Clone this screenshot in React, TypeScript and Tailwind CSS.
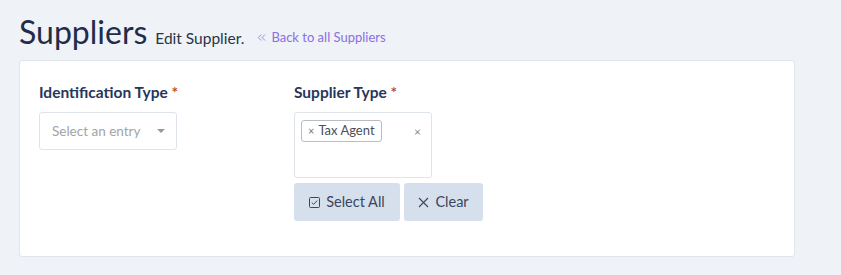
import { ChevronsLeft } from "lucide-react";

const font = { fontFamily: "Lato, 'Noto Sans', sans-serif" };

export default function App() {
  return (
    <div className="min-h-[275px] w-[841px] bg-[#eff2f7] px-[19px] pt-[11px]" style={font}>
      <div className="flex items-baseline gap-[8px]">
        <h1 className="text-[32px] font-normal leading-[42px] text-[#1f2d4a]">Suppliers</h1>
        <span className="text-[15.5px] text-[#2b3445]">Edit Supplier.</span>
        <a className="ml-[3px] flex items-center gap-[3px] text-[13px] text-[#8b6fe0]">
          <ChevronsLeft size={13} strokeWidth={1.5} />
          Back to all Suppliers
        </a>
      </div>

      <div className="mt-[7px] h-[197px] w-[776px] rounded-[3px] border border-[#e1e5ec] bg-white px-[19px] pt-[21px]">
        <div className="flex gap-[117px]">
          <div className="w-[138px]">
            <label className="block whitespace-nowrap text-[15.5px] font-bold leading-[20px] text-[#27375a]">
              Identification Type <span className="text-[#c0502f]">*</span>
            </label>
            <div className="mt-[10px] flex h-[38px] items-center justify-between rounded-[3px] border border-[#dfe3ea] pl-[12px] pr-[11px]">
              <span className="text-[13.5px] text-[#a0a4ab]">Select an entry</span>
              <span className="h-0 w-0 border-x-[4px] border-t-[4px] border-x-transparent border-t-[#999]" />
            </div>
          </div>

          <div>
            <label className="block whitespace-nowrap text-[15.5px] font-bold leading-[20px] text-[#27375a]">
              Supplier Type <span className="text-[#c0502f]">*</span>
            </label>
            <div className="mt-[10px] flex h-[66px] w-[138px] items-start justify-between rounded-[3px] border border-[#dfe3ea] pl-[6px] pr-[10px] pt-[7px]">
              <span className="flex h-[22px] items-center gap-[4px] rounded-[3px] border border-[#b8bcc3] px-[6px] text-[13px] text-[#4a4f58]">
                <span className="text-[11px] text-[#777]">×</span>Tax Agent
              </span>
              <span className="mt-[3px] text-[12px] text-[#888]">×</span>
            </div>
            <div className="mt-[5px] flex gap-[4px]">
              <button className="flex h-[38px] w-[106px] items-center justify-center gap-[6px] rounded-[3px] bg-[#d6e0ec] text-[14.5px] text-[#3a4660]">
                <svg width="11" height="11" viewBox="0 0 11 11" fill="none" stroke="#3a4660" strokeWidth="1">
                  <rect x="0.5" y="0.5" width="10" height="10" rx="1" />
                  <path d="M2.8 5.6 L4.6 7.3 L8.2 3.6" />
                </svg>
                Select All
              </button>
              <button className="flex h-[38px] w-[79px] items-center justify-center gap-[6px] rounded-[3px] bg-[#d6e0ec] text-[14.5px] text-[#3a4660]">
                <svg width="11" height="11" viewBox="0 0 11 11" fill="none" stroke="#3a4660" strokeWidth="1.1">
                  <path d="M1 1 L10 10 M10 1 L1 10" />
                </svg>
                Clear
              </button>
            </div>
          </div>
        </div>
      </div>
    </div>
  );
}
